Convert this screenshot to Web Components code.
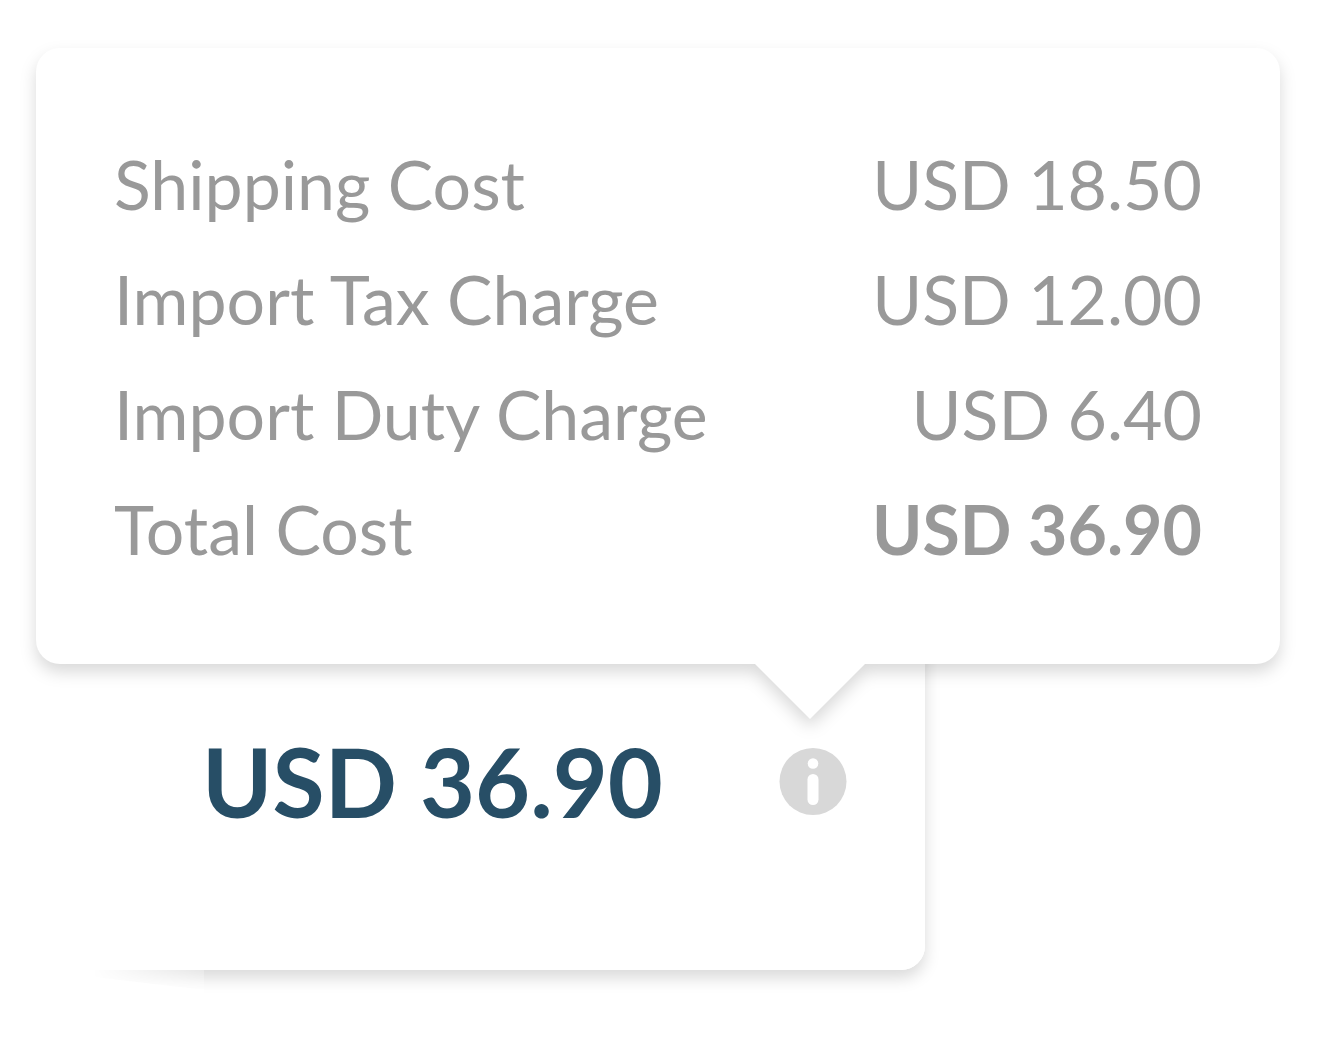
<!DOCTYPE html>
<html lang="en">
<head>
<meta charset="utf-8">
<meta name="viewport" content="width=device-width, initial-scale=1">
<title>Landed cost</title>
<style>
  body { margin: 0; background: #fff; font-family: Lato, "Liberation Sans", sans-serif; }
</style>
</head>
<body>
<cost-widget>
  <cost-tooltip slot="details">
    <cost-row label="Shipping Cost">USD 18.50</cost-row>
    <cost-row label="Import Tax Charge">USD 12.00</cost-row>
    <cost-row label="Import Duty Charge">USD 6.40</cost-row>
    <cost-row label="Total Cost" total>USD 36.90</cost-row>
  </cost-tooltip>
  <price-card slot="price">USD 36.90</price-card>
</cost-widget>
<script>
  class BaseElement extends HTMLElement {
    constructor() {
      super();
      this.attachShadow({ mode: "open" }).innerHTML = this.constructor.markup;
    }
  }

  customElements.define("cost-widget", class extends BaseElement {
    static markup = `
      <style>
        :host { display: flex; flex-direction: column; padding: 48px 49px 48px 36px; }
      </style>
      <slot name="details"></slot>
      <slot name="price"></slot>`;
  });

  customElements.define("cost-tooltip", class extends BaseElement {
    static markup = `
      <style>
        :host { display: block; position: relative; z-index: 1; box-sizing: border-box;
          padding: 78px; background: #fff; border-radius: 24px;
          filter: drop-shadow(0 8px 8px rgba(0, 0, 0, .15)); }
        .arrow { position: absolute; top: 100%; right: 414px; width: 112px; height: 56px;
          margin-top: -1px; display: block; }
      </style>
      <slot></slot>
      <svg class="arrow" viewBox="0 0 112 56" aria-hidden="true"><path d="M0 0H112L56 56Z" fill="#fff"/></svg>`;
  });

  customElements.define("cost-row", class extends BaseElement {
    static markup = `
      <style>
        :host { display: flex; justify-content: space-between; color: #999;
          font-size: 68px; line-height: 115px; white-space: nowrap; }
        :host([total]) .amount { font-weight: 700; }
      </style>
      <span class="label"></span>
      <span class="amount"><slot></slot></span>`;
    connectedCallback() {
      this.shadowRoot.querySelector(".label").textContent = this.getAttribute("label");
    }
  });

  customElements.define("price-card", class extends BaseElement {
    static markup = `
      <style>
        :host { display: flex; align-items: center; justify-content: space-between;
          margin-right: 355px; padding: 58px 78px 130px 166px;
          background: #fff; border-radius: 0 0 24px 0; position: relative; }
        .price { font-size: 95px; line-height: 118px; font-weight: 700; color: #274e66; white-space: nowrap; }
        button { display: block; padding: 0; border: 0; background: none; width: 68px; height: 68px; cursor: pointer; }
        svg { display: block; width: 100%; height: 100%; }
        /* shadow of the card, fading out towards its open left side */
        .shade { position: absolute; inset: 0 -40px -40px 56px; overflow: hidden; z-index: -1;
          clip-path: polygon(0 0, 100% 0, 100% 100%, 112px 100%, 112px calc(100% - 20px), 0 calc(100% - 33px));
          -webkit-mask: linear-gradient(90deg, transparent, rgba(0, 0, 0, .75) 112px, #000 112px);
          mask: linear-gradient(90deg, transparent, rgba(0, 0, 0, .75) 112px, #000 112px); }
        .shade::before { content: ""; position: absolute; inset: -40px 40px 40px -80px;
          border-radius: 24px; box-shadow: 0 8px 16px rgba(0, 0, 0, .15); }
      </style>
      <div class="shade"></div>
      <span class="price"><slot></slot></span>
      <button type="button" aria-label="Cost details">
        <svg viewBox="0 0 68 68" aria-hidden="true">
          <circle cx="34" cy="34.5" r="33.5" fill="#d8d8d8"/>
          <circle cx="34" cy="16.5" r="5.3" fill="#fff"/>
          <rect x="28.5" y="27" width="11" height="31" rx="5.5" fill="#fff"/>
        </svg>
      </button>`;
  });
</script>
</body>
</html>
